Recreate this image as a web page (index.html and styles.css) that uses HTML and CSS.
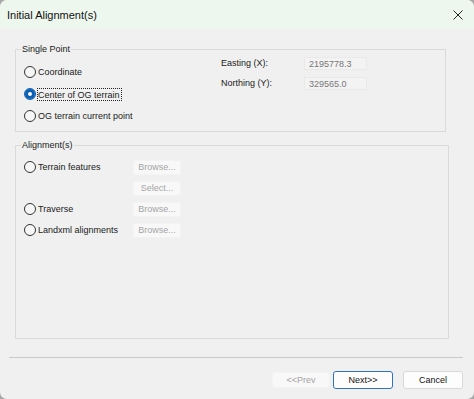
FILE: index.html
```html
<!DOCTYPE html>
<html lang="en">
<head>
  <meta charset="UTF-8">
  <title>Initial Alignment(s)</title>
  <link rel="stylesheet" href="styles.css">
</head>
<body>
  <div class="dialog">
    <div class="titlebar">
      <span class="title">Initial Alignment(s)</span>
      <svg class="close" width="10" height="10" viewBox="0 0 10 10">
        <path d="M0.5 0.5 L9.5 9.5 M9.5 0.5 L0.5 9.5" stroke="#222" stroke-width="1" fill="none"/>
      </svg>
    </div>

    <div class="content">
      <fieldset class="group group-point">
        <legend>Single Point</legend>
        <div class="point-body">
          <div class="radios">
            <label class="radio"><span class="dot"></span>Coordinate</label>
            <label class="radio"><span class="dot checked"></span><span class="focus">Center of OG terrain</span></label>
            <label class="radio"><span class="dot"></span>OG terrain current point</label>
          </div>
          <div class="coords">
            <span class="coord-label">Easting (X):</span>
            <span class="coord-value">2195778.3</span>
            <span class="coord-label">Northing (Y):</span>
            <span class="coord-value">329565.0</span>
          </div>
        </div>
      </fieldset>

      <fieldset class="group group-align">
        <legend>Alignment(s)</legend>
        <div class="align-grid">
          <label class="radio"><span class="dot"></span>Terrain features</label>
          <button class="small-btn" disabled>Browse...</button>
          <span></span>
          <button class="small-btn" disabled>Select...</button>
          <label class="radio"><span class="dot"></span>Traverse</label>
          <button class="small-btn" disabled>Browse...</button>
          <label class="radio"><span class="dot"></span>Landxml alignments</label>
          <button class="small-btn" disabled>Browse...</button>
        </div>
      </fieldset>

      <div class="sep"></div>

      <div class="footer">
        <button class="btn btn-prev" disabled>&lt;&lt;Prev</button>
        <button class="btn btn-next">Next&gt;&gt;</button>
        <button class="btn btn-cancel">Cancel</button>
      </div>
    </div>
  </div>
</body>
</html>
```

FILE: styles.css
```css
html, body { margin: 0; padding: 0; background: #a8a8a8; }
body { font-family: "Liberation Sans", Arial, sans-serif; font-size: 9px; color: #1a1a1a; }

.dialog { width: 474px; height: 399px; background: #f0f0f0; border-radius: 7px; overflow: hidden; display: flex; flex-direction: column; }

.titlebar { height: 29px; flex: none; background: #edf7ed; display: flex; align-items: center; justify-content: space-between; padding: 1px 11px 0 7px; box-sizing: border-box; }
.title { font-size: 11px; color: #111; }
.close { display: block; }

.content { flex: 1; display: flex; flex-direction: column; padding-top: 14px; }

.group { border: 1px solid #dadada; margin: 0; padding: 0; min-width: 0; }
.group legend { padding: 0 1px; margin-left: 5px; line-height: 12px; }
.group-point { margin: 0 28px 0 15px; padding-bottom: 4px; }
.group-align { margin: 7px 25px 0 15px; flex: 1; }

.point-body { display: flex; }
.radios { width: 197px; padding: 6px 0 0 8px; display: flex; flex-direction: column; }
.radios .radio { height: 22px; }

.radio { display: flex; align-items: center; gap: 2px; white-space: nowrap; }
.dot { width: 10px; height: 10px; border: 1px solid #333; border-radius: 50%; background: #f7f7f7; flex: none; }
.dot.checked { border-color: #0a5fb4; background: #0a5fb4; box-shadow: inset 0 0 0 3px #0a5fb4, inset 0 0 0 5px #fff; }
.dot.checked { background: radial-gradient(circle, #fff 0 2px, #0a5fb4 2.5px); }
.focus { border: 1px dotted #222; padding: 1px 1px 0 0; margin-left: -1px; line-height: 10px; }

.coords { display: grid; grid-template-columns: 83px 63px; grid-auto-rows: 14px; row-gap: 6px; align-items: center; padding-top: 1px; }
.coord-value { height: 13px; line-height: 13px; background: #f3f3f3; border: 1px solid #e9e9e9; box-sizing: border-box; padding-left: 4px; color: #777; }

.align-grid { display: grid; grid-template-columns: 109px 48px; grid-auto-rows: 16px; row-gap: 5px; align-items: center; padding: 8px 0 0 8px; }

.small-btn { height: 15px; padding: 0; font: inherit; color: #a5a5a5; background: #f8f8f8; border: 1px solid #f3f3f3; border-radius: 2px; }

.sep { height: 1px; background: #c9c9c9; margin: 18px 11px 0 9px; flex: none; }

.footer { display: flex; justify-content: flex-end; align-items: center; padding: 13px 11px 10px 0; gap: 3px; flex: none; height: 18px; }
.btn { font: inherit; font-size: 9px; height: 18px; border-radius: 3px; padding: 0; }
.btn-prev { width: 58px; height: 16px; background: #f8f8f8; color: #a3a3a3; border: 1px solid #f4f4f4; }
.btn-next { width: 60px; background: #fdfdfd; color: #111; border: 1px solid #2f72c0; }
.btn-cancel { width: 60px; margin-left: 7px; background: #fdfdfd; color: #111; border: 1px solid #d9d9d9; }
```
